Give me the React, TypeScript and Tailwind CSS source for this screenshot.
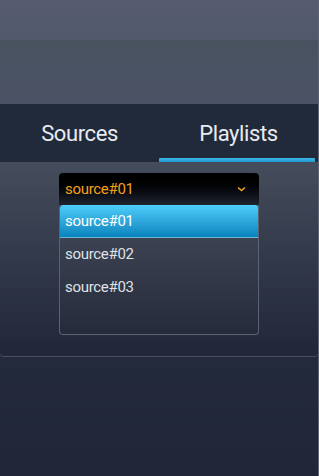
import { useState } from "react";

const sources = ["source#01", "source#02", "source#03"];

export default function App() {
  const [tab, setTab] = useState("Playlists");
  const [selected, setSelected] = useState("source#01");

  return (
    <div
      className="w-[319px] h-[476px] flex overflow-hidden"
      style={{ fontFamily: "Roboto, 'Liberation Sans', sans-serif" }}
    >
      <div className="flex-1 flex flex-col bg-gradient-to-b from-[#2c3445] to-[#212738]">
        {/* Header */}
        <div className="h-[40px] bg-gradient-to-b from-[#565b6f] to-[#52586b]" />
        <div className="h-[64px] bg-gradient-to-b from-[#48535f] to-[#4b5266]" />

        {/* Tabs */}
        <div className="h-[58px] bg-[#212a3b] flex">
          {["Sources", "Playlists"].map((t) => (
            <button
              key={t}
              onClick={() => setTab(t)}
              className="flex-1 flex flex-col items-center"
            >
              <span className="flex-1 flex items-center pt-[4px] text-[22px] tracking-[-0.4px] text-[#e8ebef]">
                {t}
              </span>
              <span
                className={`h-[4px] w-[156px] self-start rounded-t-[1px] ${
                  tab === t ? "bg-gradient-to-b from-[#3cb8ea] to-[#1e97cc]" : "bg-transparent"
                }`}
              />
            </button>
          ))}
        </div>

        {/* Panel */}
        <div className="h-[195px] bg-gradient-to-b from-[#454c5c] to-[#212738] border-b border-[#4a5061] rounded-b-[4px] flex flex-col items-center pt-[11px]">
          <div className="w-[200px] flex flex-col">
            <div className="h-[32px] rounded-t-[4px] bg-gradient-to-b from-[#000000] to-[#1f2430] flex items-center justify-between pl-[6px] pr-[13px]">
              <span className="text-[15px] text-[#f3a11a] tracking-[-0.3px]">{selected}</span>
              <svg width="9" height="6" viewBox="0 0 9 6" fill="none">
                <path d="M1 1.5 L4.5 4.5 L8 1.5" stroke="#f3a11a" strokeWidth="1.6" />
              </svg>
            </div>
            <div className="h-[130px] rounded-[4px] rounded-tr-none border border-t-0 border-[#5b6274] bg-gradient-to-b from-[#444a5a] to-[#252b3a] flex flex-col overflow-hidden">
              {sources.map((s) => (
                <div
                  key={s}
                  onClick={() => setSelected(s)}
                  className={`h-[33px] flex items-center pl-[5px] text-[15px] tracking-[-0.3px] ${
                    s === selected
                      ? "bg-gradient-to-b from-[#4dcdfb] to-[#0584bd] text-white border-b border-[#6fb6d6] rounded-t-[3px]"
                      : "text-[#dfe2e8]"
                  }`}
                >
                  {s}
                </div>
              ))}
            </div>
          </div>
        </div>
      </div>
      <div className="w-[1px] bg-[#5d6274]" />
    </div>
  );
}
